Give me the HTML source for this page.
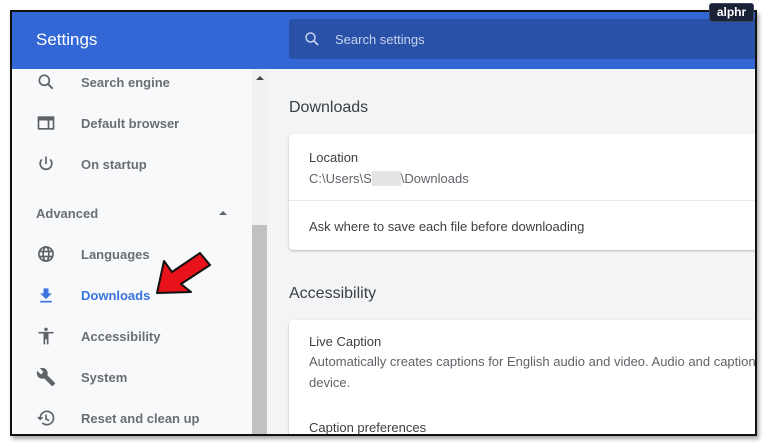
<!DOCTYPE html>
<html><head><style>
*{margin:0;padding:0;box-sizing:border-box}
body{width:768px;height:447px;background:#fff;position:relative;overflow:hidden;font-family:"Liberation Sans",sans-serif}
.frame{position:absolute;left:10px;top:10px;width:747px;height:426px;border:2px solid #111;box-shadow:2px 3px 4px rgba(0,0,0,.35);overflow:hidden;background:#f3f4f6}
.hdr{position:absolute;left:0;top:0;width:100%;height:57px;background:#3367d6}
.hdr .t{position:absolute;left:24px;top:18px;color:#fff;font-size:17px}
.sbox{position:absolute;left:277px;top:7px;width:470px;height:40px;background:#2a51a8;border-radius:3px}
.sbox span{position:absolute;left:46px;top:13px;color:#c8d3ee;font-size:13px}
.side{position:absolute;left:0;top:57px;width:240px;height:369px;background:#f8f9fa}
.item{position:absolute;left:0;width:240px;height:20px;font-size:13px;color:#6a6e73;font-weight:bold}
.item span{position:absolute;left:69px;top:2px}
.item svg{position:absolute;left:24px;top:-1px}
.sb{position:absolute;left:240px;top:57px;width:15px;height:369px;background:#f1f1f1}
.thumb{position:absolute;left:240px;top:213px;width:15px;height:213px;background:#c1c1c1}
.card{position:absolute;left:277px;background:#fff;width:480px;border-radius:4px;box-shadow:0 1px 2px rgba(0,0,0,.25)}
.c{color:#3c4043;font-size:13px;position:absolute;left:20px}
.g{color:#5f6368}
.h{position:absolute;left:277px;font-size:16px;color:#3c4043}
</style></head><body>
<div class="frame">
<div class="hdr"><div class="t">Settings</div>
<div class="sbox"><svg style="position:absolute;left:14px;top:11px" width="18" height="18" viewBox="0 0 24 24"><circle cx="10" cy="10" r="6" fill="none" stroke="#c8d3ee" stroke-width="2"/><path d="M14.5 14.5L20 20" stroke="#c8d3ee" stroke-width="2.4"/></svg><span>Search settings</span></div></div>
<div class="side">
<div class="item" style="top:4px"><svg width="20" height="20" viewBox="0 0 24 24"><circle cx="10" cy="10" r="6" fill="none" stroke="#5f6368" stroke-width="2"/><path d="M14.5 14.5L20 20" stroke="#5f6368" stroke-width="2.4"/></svg><span>Search engine</span></div>
<div class="item" style="top:45px"><svg width="20" height="20" viewBox="0 0 24 24"><rect x="3" y="5" width="18" height="14" fill="none" stroke="#5f6368" stroke-width="2"/><rect x="3" y="5" width="18" height="4" fill="#5f6368"/><rect x="14" y="9" width="2" height="10" fill="#5f6368"/></svg><span>Default browser</span></div>
<div class="item" style="top:86px"><svg width="20" height="20" viewBox="0 0 24 24"><path d="M7 6.5A7 7 0 1 0 17 6.5" fill="none" stroke="#5f6368" stroke-width="2"/><path d="M12 3v9" stroke="#5f6368" stroke-width="2"/></svg><span>On startup</span></div>
<div class="item" style="top:135px"><span style="left:24px">Advanced</span><svg style="left:206px;top:4px" width="10" height="10" viewBox="0 0 10 10"><path d="M1 7L5 3L9 7Z" fill="#5f6368"/></svg></div>
<div class="item" style="top:176px"><svg width="20" height="20" viewBox="0 0 24 24"><circle cx="12" cy="12" r="8.5" fill="none" stroke="#5f6368" stroke-width="2"/><ellipse cx="12" cy="12" rx="3.5" ry="8.5" fill="none" stroke="#5f6368" stroke-width="2"/><path d="M3.5 9h17M3.5 15h17" stroke="#5f6368" stroke-width="2"/></svg><span>Languages</span></div>
<div class="item" style="top:217px"><svg width="20" height="20" viewBox="0 0 24 24"><path d="M9 4h6v6h4l-7 7-7-7h4z" fill="#3b73e0"/><rect x="5" y="19" width="14" height="2" fill="#3b73e0"/></svg><span style="color:#3b73e0">Downloads</span></div>
<div class="item" style="top:258px"><svg width="20" height="20" viewBox="0 0 24 24"><circle cx="12" cy="4" r="2" fill="#5f6368"/><path d="M3 7h18v2h-6v13h-2v-6h-2v6H9V9H3z" fill="#5f6368"/></svg><span>Accessibility</span></div>
<div class="item" style="top:299px"><svg width="20" height="20" viewBox="0 0 24 24"><path d="M22.7 19l-9.1-9.1c.9-2.3.4-5-1.5-6.9-2-2-5-2.4-7.4-1.3L9 6 6 9 1.6 4.7C.4 7.1.9 10.1 2.9 12.1c1.9 1.9 4.6 2.4 6.9 1.5l9.1 9.1c.4.4 1 .4 1.4 0l2.3-2.3c.5-.4.5-1.1.1-1.4z" fill="#5f6368"/></svg><span>System</span></div>
<div class="item" style="top:340px"><svg width="20" height="20" viewBox="0 0 24 24"><path d="M5 12a8 8 0 1 1 2.5 5.8" fill="none" stroke="#5f6368" stroke-width="2"/><path d="M1 11h8l-4 4z" fill="#5f6368"/><path d="M12 8v5l3.5 2" fill="none" stroke="#5f6368" stroke-width="2"/></svg><span>Reset and clean up</span></div>
</div>
<div class="sb"></div><div class="thumb"></div>
<svg style="position:absolute;left:244px;top:63px" width="8" height="6"><path d="M0 5L4 1L8 5Z" fill="#444"/></svg>
<div class="h" style="top:87px">Downloads</div>
<div class="card" style="top:122px;height:116px">
<div class="c" style="top:16px">Location</div>
<div class="c g" style="top:37px">C:\Users\S<span style="background:#e4e4e4;color:transparent">aaaa</span>\Downloads</div>
<div style="position:absolute;left:0;top:66px;width:100%;height:1px;background:#e8e8e8"></div>
<div class="c" style="top:85px">Ask where to save each file before downloading</div>
</div>
<div class="h" style="top:273px">Accessibility</div>
<div class="card" style="top:308px;height:130px">
<div class="c" style="top:14px">Live Caption</div>
<div class="c g" style="top:34px;white-space:nowrap">Automatically creates captions for English audio and video. Audio and captions</div>
<div class="c g" style="top:55px">device.</div>
<div class="c" style="top:100px">Caption preferences</div>
</div>
</div>
<svg style="position:absolute;left:150px;top:248px" width="65" height="52" viewBox="0 0 65 52"><path d="M7 45L14 13L22 24L50 5L60 17L31 36L41 44Z" fill="#e8121a" stroke="#111" stroke-width="2" stroke-linejoin="round"/></svg>
<div style="position:absolute;left:709px;top:3px;width:45px;height:19px;background:#1a2238;border:1px solid #3a4560;border-radius:3px;color:#fff;font-size:12px;font-weight:bold;text-align:center;line-height:17px">alphr</div>
</body></html>
